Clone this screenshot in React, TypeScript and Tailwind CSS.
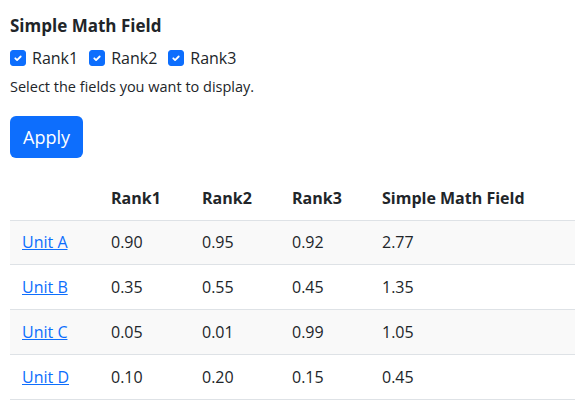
import { useState } from "react";

const rows = [
  { name: "Unit A", r1: "0.90", r2: "0.95", r3: "0.92", sum: "2.77" },
  { name: "Unit B", r1: "0.35", r2: "0.55", r3: "0.45", sum: "1.35" },
  { name: "Unit C", r1: "0.05", r2: "0.01", r3: "0.99", sum: "1.05" },
  { name: "Unit D", r1: "0.10", r2: "0.20", r3: "0.15", sum: "0.45" },
];

function Check({ label }: { label: string }) {
  const [on, setOn] = useState(true);
  return (
    <label className="flex cursor-pointer items-center gap-[6px]">
      <button
        type="button"
        onClick={() => setOn(!on)}
        className={`flex h-4 w-4 items-center justify-center rounded-[3px] border ${
          on ? "border-[#0d6efd] bg-[#0d6efd]" : "border-[#adb5bd] bg-white"
        }`}
      >
        {on && (
          <svg viewBox="0 0 20 20" className="h-[12px] w-[12px]">
            <path
              d="M5.5 10.5l3 3 6-6"
              fill="none"
              stroke="white"
              strokeWidth="3"
              strokeLinecap="round"
              strokeLinejoin="round"
            />
          </svg>
        )}
      </button>
      <span>{label}</span>
    </label>
  );
}

export default function App() {
  return (
    <div className="min-h-screen bg-white px-[10px] pt-[15px] font-['Open_Sans',sans-serif] text-[16px] text-[#212529]">
      <h5 className="text-[17px] font-bold leading-[22px]">Simple Math Field</h5>
      <div className="mt-[9px] flex items-center gap-[11px] leading-[24px]">
        <Check label="Rank1" />
        <Check label="Rank2" />
        <Check label="Rank3" />
      </div>
      <p className="mt-[7px] text-[14.5px] leading-[20px]">
        Select the fields you want to display.
      </p>
      <button className="mt-[19px] h-[42px] rounded-[6px] bg-[#0d6efd] px-[13px] text-[18px] text-white">
        Apply
      </button>
      <table className="mt-[18px] w-[565px] border-collapse text-left">
        <thead>
          <tr className="h-[44px] border-b border-[#dee2e6]">
            <th className="w-[89px] px-[12px]"></th>
            <th className="w-[91px] px-[12px] font-bold">Rank1</th>
            <th className="w-[90px] px-[12px] font-bold">Rank2</th>
            <th className="w-[90px] px-[12px] font-bold">Rank3</th>
            <th className="px-[12px] font-bold">Simple Math Field</th>
          </tr>
        </thead>
        <tbody>
          {rows.map((r, i) => (
            <tr
              key={r.name}
              className={`h-[44.75px] border-b border-[#dee2e6] ${i % 2 === 0 ? "bg-[#f9f9f9]" : "bg-white"}`}
            >
              <td className="px-[12px]">
                <a href="#" className="text-[#0d6efd] underline">
                  {r.name}
                </a>
              </td>
              <td className="px-[12px]">{r.r1}</td>
              <td className="px-[12px]">{r.r2}</td>
              <td className="px-[12px]">{r.r3}</td>
              <td className="px-[12px]">{r.sum}</td>
            </tr>
          ))}
        </tbody>
      </table>
    </div>
  );
}
